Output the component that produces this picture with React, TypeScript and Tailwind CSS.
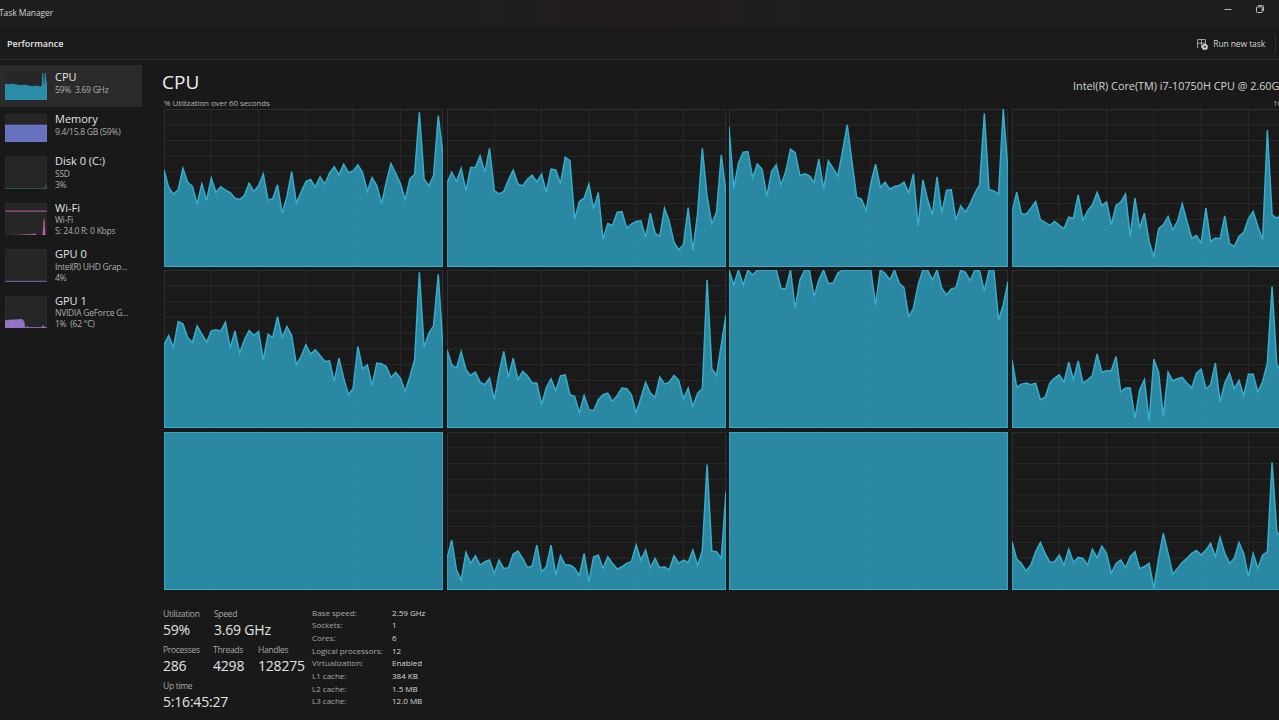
import React from "react";

// Samples per logical processor, read as y positions from the top of each graph
const full = Array(60).fill(0);

const rawCores: { top: number; ys: number[] }[] = [
  { top: 12, ys: [195, 248, 268, 255, 190, 232, 245, 298, 237, 287, 220, 263, 246, 256, 263, 280, 284, 272, 235, 260, 243, 207, 286, 282, 240, 325, 275, 200, 295, 262, 230, 224, 247, 216, 238, 205, 185, 210, 178, 203, 198, 180, 203, 260, 218, 242, 297, 232, 176, 205, 237, 285, 222, 208, 22, 222, 243, 213, 32, 150] },
  { top: 12, ys: [235, 202, 230, 190, 258, 188, 188, 153, 203, 130, 257, 267, 260, 225, 196, 237, 243, 223, 211, 231, 208, 262, 193, 195, 237, 157, 167, 343, 290, 280, 238, 312, 263, 404, 356, 362, 322, 320, 370, 358, 350, 348, 398, 325, 385, 395, 310, 350, 412, 435, 420, 308, 438, 325, 130, 275, 357, 322, 150, 265] },
  { top: 12, ys: [65, 250, 175, 142, 140, 218, 177, 193, 275, 200, 180, 240, 200, 133, 143, 212, 207, 213, 233, 163, 253, 168, 190, 214, 140, 60, 170, 277, 283, 317, 235, 178, 248, 232, 253, 245, 242, 232, 265, 207, 365, 225, 285, 330, 216, 325, 256, 255, 347, 303, 322, 297, 265, 240, 25, 255, 258, 268, 12, 200] },
  { top: 12, ys: [322, 262, 327, 328, 310, 290, 345, 353, 362, 350, 362, 372, 337, 340, 270, 347, 318, 300, 263, 302, 291, 360, 302, 292, 268, 395, 280, 370, 325, 410, 457, 372, 360, 335, 375, 350, 297, 350, 400, 392, 415, 310, 410, 400, 402, 333, 417, 425, 395, 383, 342, 320, 365, 405, 75, 330, 340, 330, 340, 300] },
  { top: 15, ys: [240, 212, 248, 170, 177, 218, 233, 183, 208, 232, 198, 195, 199, 172, 250, 198, 265, 225, 197, 212, 200, 285, 208, 218, 155, 218, 185, 212, 300, 275, 240, 268, 255, 272, 290, 288, 350, 280, 340, 390, 370, 245, 312, 300, 362, 295, 297, 305, 338, 323, 340, 380, 335, 285, 22, 247, 205, 183, 28, 250] },
  { top: 15, ys: [255, 300, 310, 260, 315, 332, 322, 352, 360, 340, 405, 325, 260, 338, 280, 345, 320, 333, 355, 355, 420, 368, 342, 378, 333, 330, 390, 395, 445, 392, 435, 438, 405, 390, 385, 410, 392, 370, 372, 390, 445, 400, 353, 385, 398, 337, 358, 352, 332, 347, 402, 370, 425, 385, 372, 45, 312, 332, 240, 150] },
  { top: 15, ys: [15, 60, 15, 60, 15, 30, 15, 15, 15, 15, 15, 70, 72, 15, 130, 45, 15, 15, 95, 45, 15, 55, 55, 25, 15, 15, 15, 15, 15, 15, 15, 120, 15, 25, 45, 15, 55, 68, 155, 130, 60, 15, 15, 45, 15, 70, 90, 72, 68, 15, 22, 47, 15, 18, 78, 15, 15, 165, 120, 50] },
  { top: 15, ys: [285, 368, 358, 355, 360, 355, 405, 398, 355, 340, 330, 352, 292, 345, 288, 355, 345, 332, 267, 322, 318, 318, 275, 382, 370, 370, 460, 375, 345, 470, 283, 322, 455, 322, 348, 342, 338, 355, 370, 325, 313, 372, 360, 295, 412, 355, 325, 372, 347, 393, 328, 328, 382, 350, 295, 65, 300, 320, 360, 300] },
  { top: 0, ys: full },
  { top: 20, ys: [400, 345, 435, 465, 382, 415, 392, 420, 410, 405, 445, 405, 430, 428, 387, 378, 400, 427, 423, 360, 440, 425, 360, 450, 392, 420, 420, 430, 452, 385, 470, 395, 390, 430, 395, 415, 432, 425, 415, 410, 360, 405, 375, 428, 400, 428, 425, 435, 392, 415, 405, 412, 375, 422, 375, 118, 378, 380, 400, 200] },
  { top: 0, ys: full },
  { top: 20, ys: [350, 402, 415, 438, 420, 380, 352, 385, 412, 410, 390, 420, 372, 412, 397, 400, 420, 372, 398, 363, 385, 445, 415, 405, 428, 395, 380, 430, 425, 415, 490, 400, 325, 385, 447, 430, 412, 400, 385, 376, 390, 375, 355, 395, 337, 385, 415, 400, 352, 385, 455, 385, 430, 390, 380, 112, 320, 340, 350, 300] },
];

function CoreGraph({ top, ys }: { top: number; ys: number[] }) {
  const pts = ys.map((y, i) => `${i},${Math.max(y - top, 0)}`).join(" ");
  return (
    <div className="bg-[#1a1a1a]">
      <svg viewBox="0 0 59 474" preserveAspectRatio="none" className="block w-full h-full">
        <rect x={0} y={0} width={59} height={474} fill="none" stroke="#2e2e2e" strokeWidth={2} vectorEffect="non-scaling-stroke" />
        {[10, 20, 30, 40, 50].map((x) => (
          <line key={x} x1={x} x2={x} y1={0} y2={474} stroke="#2a2a2a" strokeWidth={1} vectorEffect="non-scaling-stroke" />
        ))}
        {[1, 2, 3, 4, 5, 6, 7, 8, 9].map((k) => (
          <line key={k} x1={0} x2={59} y1={k * 47.4} y2={k * 47.4} stroke="#2a2a2a" strokeWidth={1} vectorEffect="non-scaling-stroke" />
        ))}
        <polygon
          points={`0,474 ${pts} 59,474`}
          fill="#2b8ca8"
          fillOpacity={0.97}
          stroke="#36adca"
          strokeWidth={1.5}
          vectorEffect="non-scaling-stroke"
        />
      </svg>
    </div>
  );
}

const sidebarItems = [
  {
    name: "CPU",
    lines: ["59%  3.69 GHz"],
    thumb: "M0 28V12L4 12.5L8 12L12 13L16 13.5L20 13L24 14L28 14.5L32 14L36 15L37 14L37.8 1L38.6 14L39.4 14L40.2 1L41 9L42 14V28Z",
    fill: "#2b8ca8",
    stroke: "#36abc8",
  },
  {
    name: "Memory",
    lines: ["9.4/15.8 GB (59%)"],
    thumb: "M0 28V11H42V28Z",
    fill: "#6671bd",
    stroke: "#7c88d8",
  },
  {
    name: "Disk 0 (C:)",
    lines: ["SSD", "3%"],
    thumb: "M0 32H36L40 31.5L41 28L42 32Z",
    fill: "#1c5f50",
    stroke: "#1f6a59",
  },
  {
    name: "Wi-Fi",
    lines: ["Wi-Fi", "S: 24.0 R: 0 Kbps"],
    thumb: "M0 32L28 31L30 30L31 32L38 31.5L39 16L40 31.5L42 32Z",
    fill: "#c464a6",
    stroke: "#d870b8",
    line: 8,
  },
  {
    name: "GPU 0",
    lines: ["Intel(R) UHD Grap...", "4%"],
    thumb: "M0 32V31.5H42V32Z",
    fill: "#7a5fb0",
    stroke: "#7a5fb0",
  },
  {
    name: "GPU 1",
    lines: ["NVIDIA GeForce G...", "1%  (62 °C)"],
    thumb: "M0 32V24L17 23L19 25L20 32L22 30L24 31H37L38 29L40 31H42V32Z",
    fill: "#9373c4",
    stroke: "#a383d4",
  },
];

function SidebarItem({ item, active }: { item: (typeof sidebarItems)[number]; active: boolean }) {
  const tall = item.lines.length > 1;
  return (
    <div className={`flex gap-2 pl-[5px] pt-[7px] ${tall ? "h-[46.5px]" : "h-[42px]"} ${active ? "bg-[#2a2a2a]" : ""}`}>
      <div className={`w-[42px] shrink-0 bg-[#262626] ${tall ? "h-[32.5px]" : "h-[28px]"}`}>
        <svg viewBox={tall ? "0 0 42 32" : "0 0 42 28"} preserveAspectRatio="none" className="block w-full h-full">
          <rect x={0} y={0} width={42} height={tall ? 32 : 28} fill="none" stroke="#2e2e2e" strokeWidth={1} />
          {item.line && <line x1={0} x2={42} y1={item.line} y2={item.line} stroke={item.stroke} strokeWidth={0.8} />}
          <path d={item.thumb} fill={item.fill} stroke={item.stroke} strokeWidth={0.5} />
        </svg>
      </div>
      <div className="flex flex-col -mt-[2px]">
        <div className="text-[11px] leading-[13.5px] text-[#e4e4e4]">{item.name}</div>
        {item.lines.map((l) => (
          <div key={l} className="text-[8.5px] leading-[11px] tracking-[-0.25px] text-[#aeaeae] whitespace-pre">
            {l}
          </div>
        ))}
      </div>
    </div>
  );
}

function Stat({ label, value, className }: { label: string; value: string; className: string }) {
  return (
    <div className={className}>
      <div className="text-[8.5px] leading-[11px] tracking-[-0.3px] text-[#a8a8a8]">{label}</div>
      <div className="text-[14px] leading-[20px] mt-[1px] tracking-[-0.2px] text-[#e4e4e4]">{value}</div>
    </div>
  );
}

const specs = [
  ["Base speed:", "2.59 GHz"],
  ["Sockets:", "1"],
  ["Cores:", "6"],
  ["Logical processors:", "12"],
  ["Virtualization:", "Enabled"],
  ["L1 cache:", "384 KB"],
  ["L2 cache:", "1.5 MB"],
  ["L3 cache:", "12.0 MB"],
];

export default function App() {
  return (
    <div className="w-[1279px] h-[720px] overflow-hidden bg-[#191919] text-white font-['Open_Sans',sans-serif] flex flex-col">
      {/* Title bar */}
      <div className="h-[27px] shrink-0 flex items-center bg-[linear-gradient(90deg,#1e1e1e_0%,#1f1e1e_35%,#221d1c_50%,#1f1e1e_65%,#1e1e1e_100%)]">
        <span className="text-[8.5px] tracking-[-0.1px] text-[#d0d0d0] -ml-[1px]">Task Manager</span>
        <div className="ml-auto flex items-center gap-[24px] pr-[15px] mb-[9px]">
          <svg width="8" height="8" viewBox="0 0 8 8">
            <line x1="0.5" y1="4.5" x2="7.5" y2="4.5" stroke="#c8c8c8" strokeWidth="0.9" />
          </svg>
          <svg width="8" height="8" viewBox="0 0 8 8" fill="none" stroke="#d0d0d0" strokeWidth="0.9">
            <rect x="0.5" y="1.8" width="5.7" height="5.7" rx="1" />
            <path d="M2 0.6H6.4A1 1 0 0 1 7.5 1.7V6" />
          </svg>
        </div>
      </div>

      {/* Command bar */}
      <div className="h-[33px] shrink-0 flex items-center border-b border-[#2e2e2e] bg-[#1a1a1a] pl-[7px] pt-[2px]">
        <span className="text-[9px] font-semibold text-[#e4e4e4]">Performance</span>
        <div className="ml-auto flex items-center">
          <svg width="11" height="11" viewBox="0 0 12 12" fill="none" stroke="#d4d4d4" strokeWidth="0.8">
            <path d="M1.3 9.3H.6V.6H9.3V5M.6 4.6H9.3M4.9.6V9.3H5.5" />
            <circle cx="8.6" cy="8.6" r="3.1" fill="#e6e6e6" stroke="none" />
            <path d="M8.6 6.9V10.3M6.9 8.6H10.3" stroke="#1a1a1a" strokeWidth="0.9" />
          </svg>
          <span className="text-[8.5px] tracking-[-0.1px] text-[#d4d4d4] ml-[5px] mr-[10px]">Run new task</span>
          <div className="w-px h-[20px] bg-[#2c2c2c] mr-[3px]" />
        </div>
      </div>

      <div className="flex flex-1 min-h-0">
        {/* Sidebar */}
        <div className="w-[142px] shrink-0 pt-[5px] flex flex-col">
          {sidebarItems.map((item, i) => (
            <SidebarItem key={item.name} item={item} active={i === 0} />
          ))}
        </div>

        {/* Main pane */}
        <div className="flex-1 min-w-0 pl-[22px] flex flex-col">
          <div className="h-[36px] relative flex items-start">
            <span className="text-[19px] leading-[28px] mt-[8px] -ml-[2px] text-[#ececec]">CPU</span>
            <span className="ml-auto mt-[18px] text-[10.8px] leading-[16px] text-[#d4d4d4] whitespace-nowrap w-[206px] overflow-hidden">
              Intel(R) Core(TM) i7-10750H CPU @ 2.60GHz
            </span>
          </div>
          <div className="h-[13px] pt-[1px] flex justify-between text-[8px] leading-[11px] tracking-[-0.1px] text-[#b4b4b4]">
            <span>% Utilization over 60 seconds</span>
            <span className="w-[6px] overflow-hidden">100%</span>
          </div>
          <div className="grid grid-cols-[repeat(4,279px)] grid-rows-[repeat(3,157.7px)] gap-x-[3.7px] gap-y-[3.8px]">
            {rawCores.map((c, i) => (
              <CoreGraph key={i} top={c.top} ys={c.ys} />
            ))}
          </div>

          {/* Stats */}
          <div className="flex mt-[18px]">
            <div className="w-[149px] -ml-[1px] flex flex-col gap-[4px]">
              <div className="flex">
                <Stat label="Utilization" value="59%" className="w-[51px]" />
                <Stat label="Speed" value="3.69 GHz" className="" />
              </div>
              <div className="flex">
                <Stat label="Processes" value="286" className="w-[50px]" />
                <Stat label="Threads" value="4298" className="w-[45px]" />
                <Stat label="Handles" value="128275" className="" />
              </div>
              <Stat label="Up time" value="5:16:45:27" className="" />
            </div>
            <div className="grid grid-cols-[80px_auto] auto-rows-[12.7px] text-[8px] leading-[12.7px] -mt-[1px]">
              {specs.map(([k, v]) => (
                <React.Fragment key={k}>
                  <span className="text-[#a8a8a8] whitespace-nowrap">{k}</span>
                  <span className="text-[#d8d8d8]">{v}</span>
                </React.Fragment>
              ))}
            </div>
          </div>
        </div>
      </div>
    </div>
  );
}
